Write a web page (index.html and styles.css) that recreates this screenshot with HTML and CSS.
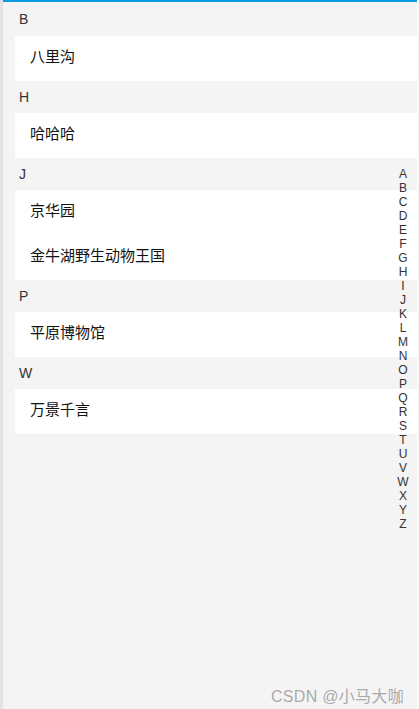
FILE: index.html
```html
<!DOCTYPE html>
<html lang="zh-CN">
<head>
    <meta charset="UTF-8" />
    <meta name="viewport" content="width=device-width, initial-scale=1.0"/>
    <title>城市列表</title>
    <link rel="stylesheet" href="styles.css">
</head>
<body>
    <div class="page">
        <div class="group">
            <div class="group-title">B</div>
            <ul class="group-list">
                <li>八里沟</li>
            </ul>
        </div>
        <div class="group">
            <div class="group-title">H</div>
            <ul class="group-list">
                <li>哈哈哈</li>
            </ul>
        </div>
        <div class="group">
            <div class="group-title">J</div>
            <ul class="group-list">
                <li>京华园</li>
                <li>金牛湖野生动物王国</li>
            </ul>
        </div>
        <div class="group">
            <div class="group-title">P</div>
            <ul class="group-list">
                <li>平原博物馆</li>
            </ul>
        </div>
        <div class="group">
            <div class="group-title">W</div>
            <ul class="group-list">
                <li>万景千言</li>
            </ul>
        </div>

        <ul class="index-bar">
            <li>A</li><li>B</li><li>C</li><li>D</li><li>E</li><li>F</li><li>G</li>
            <li>H</li><li>I</li><li>J</li><li>K</li><li>L</li><li>M</li><li>N</li>
            <li>O</li><li>P</li><li>Q</li><li>R</li><li>S</li><li>T</li><li>U</li>
            <li>V</li><li>W</li><li>X</li><li>Y</li><li>Z</li>
        </ul>

        <div class="watermark">CSDN @小马大咖</div>
    </div>
</body>
</html>
```

FILE: styles.css
```css
* {
    margin: 0;
    padding: 0;
    box-sizing: border-box;
}

html, body {
    height: 100%;
}

body {
    font-family: "Liberation Sans", Arial, "Noto Sans CJK SC", sans-serif;
    background-color: #fafafa;
    border-left: 3px solid #e3e3e3;
    overflow: hidden;
}

.page {
    position: relative;
    width: 414px;
    height: 100%;
    background-color: #f4f4f4;
    border-top: 2px solid #0c9be2;
}

.group-title {
    height: 32px;
    line-height: 32px;
    padding-left: 16px;
    font-size: 14px;
    color: #333;
}

.group:first-child .group-title {
    height: 34px;
    line-height: 35px;
}

.group-list {
    list-style: none;
    margin-left: 12px;
    background-color: #fff;
}

.group-list li {
    height: 45px;
    line-height: 42px;
    padding-left: 15px;
    font-size: 15px;
    color: #111;
}

.index-bar {
    position: absolute;
    right: 7px;
    top: 165px;
    list-style: none;
    text-align: center;
    width: 14px;
}

.index-bar li {
    height: 14px;
    line-height: 14px;
    font-size: 12px;
    color: #333;
}

.watermark {
    position: absolute;
    right: 13px;
    bottom: 2px;
    font-size: 16px;
    color: #a8a8a8;
    text-shadow: 0 0 1px #fff;
    letter-spacing: 0.3px;
}
```
